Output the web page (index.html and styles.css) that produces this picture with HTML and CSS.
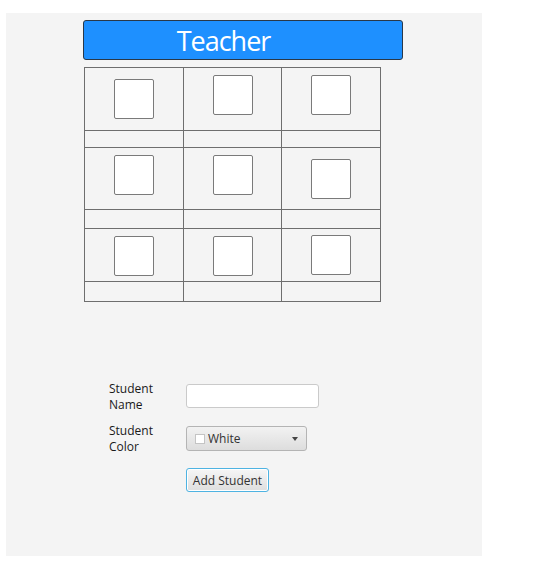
FILE: index.html
```html
<!DOCTYPE html>
<html>
   <head>
      <meta name="viewport" content="width=device-width, initial-scale=1">
      <link rel="stylesheet" href="styles.css">
   </head>
   <body>
      <div class="panel">
        <div class="header">Teacher</div>

        <div class="seats">
          <div class="cell"><div class="seat low"></div></div>
          <div class="cell"><div class="seat"></div></div>
          <div class="cell"><div class="seat"></div></div>
          <div class="cell"></div>
          <div class="cell"></div>
          <div class="cell"></div>

          <div class="cell"><div class="seat"></div></div>
          <div class="cell"><div class="seat"></div></div>
          <div class="cell"><div class="seat low"></div></div>
          <div class="cell"></div>
          <div class="cell"></div>
          <div class="cell"></div>

          <div class="cell"><div class="seat"></div></div>
          <div class="cell"><div class="seat"></div></div>
          <div class="cell"><div class="seat high"></div></div>
          <div class="cell"></div>
          <div class="cell"></div>
          <div class="cell"></div>
        </div>

        <form class="student-form" action="javascript:void(0)">
          <div class="form-row">
            <label class="form-label" for="sname">Student<br>Name</label>
            <input class="text-field" type="text" id="sname" name="sname">
          </div>
          <div class="form-row">
            <label class="form-label">Student<br>Color</label>
            <div class="combo">
              <span class="swatch"></span>
              <span class="combo-text">White</span>
              <span class="arrow"></span>
            </div>
          </div>
          <div class="form-row">
            <button class="add-button" type="button">Add Student</button>
          </div>
        </form>
      </div>
   </body>
</html>
```

FILE: styles.css
```css
body {
	margin: 0;
	background: #ffffff;
	font-family: "Open Sans", Arial, sans-serif;
	color: #1a1a1a;
}

.panel {
	margin: 13px 0 0 6px;
	width: 476px;
	height: 543px;
	padding-top: 7px;
	box-sizing: border-box;
	background: #f4f4f4;
}

.header {
	margin-left: 77px;
	width: 320px;
	height: 40px;
	box-sizing: border-box;
	padding: 2px 39px 0 0;
	background: #1e90ff;
	border: 1px solid #2a3848;
	border-radius: 3px;
	color: #ffffff;
	font-size: 27px;
	letter-spacing: -1px;
	line-height: 36px;
	text-align: center;
}

.seats {
	margin: 7px 0 0 78px;
	display: inline-grid;
	grid-template-columns: 98px 97px 98px;
	grid-template-rows: 62px 16px 61px 18px 52px 19px;
	gap: 1px;
	padding: 1px;
	background: #6e6e6e;
}

.cell {
	background: #f4f4f4;
	display: flex;
	justify-content: center;
	align-items: flex-start;
}

.seat {
	width: 40px;
	height: 40px;
	margin-top: 7px;
	box-sizing: border-box;
	background: #ffffff;
	border: 1px solid #7a7a7a;
	border-radius: 2px;
}

.seat.low {
	margin-top: 11px;
}

.seat.high {
	margin-top: 6px;
}

.student-form {
	margin: 79px 0 0 103px;
}

.form-row {
	display: flex;
	align-items: flex-start;
	margin-bottom: 10px;
}

.form-row:last-child {
	margin-top: 13px;
	padding-left: 77px;
}

.form-label {
	width: 77px;
	font-size: 12px;
	line-height: 16px;
}

.text-field {
	margin: 3px 0 0 0;
	width: 133px;
	height: 24px;
	box-sizing: border-box;
	border: 1px solid #cacaca;
	border-radius: 3px;
	background: #ffffff;
}

.combo {
	margin-top: 3px;
	width: 121px;
	height: 25px;
	box-sizing: border-box;
	display: flex;
	align-items: center;
	padding: 0 8px;
	border: 1px solid #b4b4b4;
	border-radius: 3px;
	background: linear-gradient(#f2f2f2, #dddddd);
	font-size: 12px;
	color: #333333;
}

.swatch {
	width: 10px;
	height: 10px;
	box-sizing: border-box;
	background: #ffffff;
	border: 1px solid #c4c4c4;
	margin-right: 3px;
}

.combo-text {
	flex: 1;
}

.arrow {
	width: 0;
	height: 0;
	border-left: 3.5px solid transparent;
	border-right: 3.5px solid transparent;
	border-top: 4px solid #444444;
}

.add-button {
	width: 83px;
	height: 24px;
	padding: 0;
	border: 1px solid #4eb3e2;
	border-radius: 3px;
	box-shadow: inset 0 0 0 1px #ffffff;
	background: linear-gradient(#f6f6f6, #dedede);
	font-family: "Open Sans", Arial, sans-serif;
	font-size: 12px;
	color: #333333;
}
```
